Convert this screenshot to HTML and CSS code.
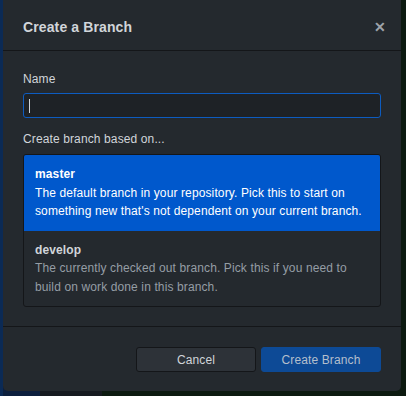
FILE: index.html
```html
<!DOCTYPE html>
<html lang="en">
<head>
  <meta charset="UTF-8">
  <title>Create a Branch</title>
  <link rel="stylesheet" href="styles.css">
</head>
<body>

  <div class="dialog">
    <div class="dialog-header">
      <h1>Create a Branch</h1>
      <span class="close">&#x2715;</span>
    </div>

    <div class="dialog-content">
      <label class="field-label" for="branchName">Name</label>
      <div class="text-input"><span class="caret"></span></div>

      <p class="field-label based-on">Create branch based on...</p>
      <ul class="branch-list">
        <li class="branch selected">
          <strong>master</strong>
          <span>The default branch in your repository. Pick this to start on something new that's not dependent on your current branch.</span>
        </li>
        <li class="branch">
          <strong>develop</strong>
          <span>The currently checked out branch. Pick this if you need to build on work done in this branch.</span>
        </li>
      </ul>
    </div>

    <div class="dialog-footer">
      <button class="btn">Cancel</button>
      <button class="btn primary">Create Branch</button>
    </div>
  </div>

</body>
</html>
```

FILE: styles.css
```css
body {
  margin: 0;
  height: 396px;
  overflow: hidden;
  font-family: "Liberation Sans", sans-serif;
  letter-spacing: 0.12px;
  background:
    linear-gradient(to right, #0b2a55 0, #0b2a55 3px, transparent 3px),
    linear-gradient(to right, #0c1f3d 0, #0c1f3d 40px, #161a20 40px, #161a20 102px, #0c1a10 102px);
}

.dialog {
  margin-left: 3px;
  width: 398px;
  height: 391px;
  background: #24292e;
  border-radius: 0 0 5px 5px;
  display: flex;
  flex-direction: column;
}

.dialog-header {
  flex-shrink: 0;
  height: 47px;
  padding: 3px 15px 0 20px;
  border-bottom: 1px solid #141619;
  display: flex;
  align-items: center;
  justify-content: space-between;
}

.dialog-header h1 {
  margin: 0;
  font-size: 14px;
  font-weight: 700;
  color: #d1d5da;
}

.close {
  font-size: 14px;
  font-weight: 700;
  color: #9ea4aa;
  cursor: pointer;
}

.dialog-content {
  padding: 21px 20px 18px 20px;
  flex: 1;
}

.field-label {
  display: block;
  margin: 0;
  font-size: 12px;
  line-height: 14px;
  color: #d1d5da;
}

.text-input {
  margin-top: 7px;
  height: 23px;
  border: 1px solid #0d5cc0;
  border-radius: 3px;
  background: #1e2226;
  display: flex;
  align-items: center;
  padding-left: 5px;
}

.caret {
  width: 1px;
  height: 14px;
  background: #d1d5da;
}

.based-on {
  margin-top: 14px;
}

.branch-list {
  list-style: none;
  margin: 8px 0 0 0;
  padding: 0;
  border: 1px solid #141619;
  border-radius: 3px;
  overflow: hidden;
}

.branch {
  padding: 10px 11px;
  font-size: 12px;
  line-height: 18.5px;
  color: #959da5;
}

.branch strong {
  display: block;
  color: #d1d5da;
}

.branch.selected {
  background: #0058cc;
  color: #ffffff;
}

.branch.selected strong {
  color: #ffffff;
}

.dialog-footer {
  flex-shrink: 0;
  border-top: 1px solid #141619;
  padding: 20px 20px 19px 20px;
  display: flex;
  justify-content: flex-end;
  gap: 5px;
}

.btn {
  width: 120px;
  height: 25px;
  font-family: inherit;
  font-size: 12px;
  letter-spacing: inherit;
  border-radius: 3px;
  cursor: pointer;
  background: #2d3238;
  border: 1px solid #141619;
  color: #d1d5da;
}

.btn.primary {
  background: #0d4a96;
  border: 1px solid #0d4a96;
  color: #b4bfcc;
}
```
